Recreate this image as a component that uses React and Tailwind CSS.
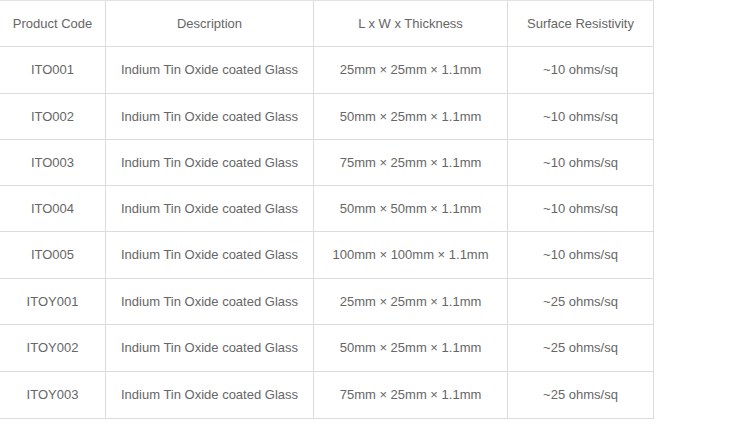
import React from "react";

const rows = [
  ["ITO001", "Indium Tin Oxide coated Glass", "25mm × 25mm × 1.1mm", "~10 ohms/sq"],
  ["ITO002", "Indium Tin Oxide coated Glass", "50mm × 25mm × 1.1mm", "~10 ohms/sq"],
  ["ITO003", "Indium Tin Oxide coated Glass", "75mm × 25mm × 1.1mm", "~10 ohms/sq"],
  ["ITO004", "Indium Tin Oxide coated Glass", "50mm × 50mm × 1.1mm", "~10 ohms/sq"],
  ["ITO005", "Indium Tin Oxide coated Glass", "100mm × 100mm × 1.1mm", "~10 ohms/sq"],
  ["ITOY001", "Indium Tin Oxide coated Glass", "25mm × 25mm × 1.1mm", "~25 ohms/sq"],
  ["ITOY002", "Indium Tin Oxide coated Glass", "50mm × 25mm × 1.1mm", "~25 ohms/sq"],
  ["ITOY003", "Indium Tin Oxide coated Glass", "75mm × 25mm × 1.1mm", "~25 ohms/sq"],
];

const header = ["Product Code", "Description", "L x W x Thickness", "Surface Resistivity"];

export default function App() {
  const all = [header, ...rows];
  return (
    <div
      className="w-[755px] h-[422px] bg-white text-[13px] text-[#666]"
      style={{ fontFamily: '"Liberation Sans", Arial, sans-serif' }}
    >
      <div className="w-[654px] border-t border-[#e2e2e2] grid grid-cols-[106px_208px_194px_146px] grid-rows-[46px_47px_46px_46px_46px_47px_46px_47px_47px]">
        {all.map((r, i) =>
          r.map((c, j) => (
            <div
              key={`${i}-${j}`}
              className="flex items-center justify-center border-r border-b border-[#dcdcdc] whitespace-nowrap"
            >
              {c}
            </div>
          ))
        )}
      </div>
    </div>
  );
}
